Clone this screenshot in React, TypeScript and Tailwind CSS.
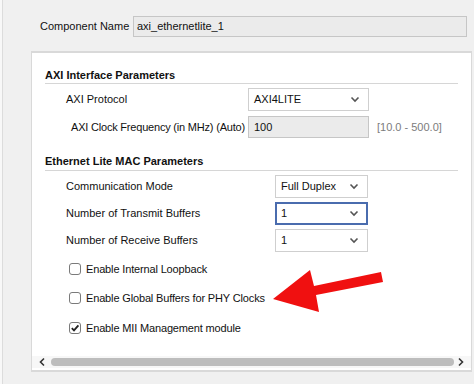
import React from 'react'

const font = { fontFamily: '"Liberation Sans", Arial, sans-serif' }

function Chevron() {
    return (
        <svg width="10" height="7" viewBox="0 0 10 7" className="shrink-0">
            <polyline points="1.5,1.5 5,5 8.5,1.5" fill="none" stroke="#555" strokeWidth="1.6" />
        </svg>
    )
}

function Select({ value, w, active }: { value: string; w: string; active?: boolean }) {
    return (
        <div className={`flex items-center justify-between bg-white h-[23px] shrink-0 ${w} ${active ? 'border-2 border-[#4a6cae] pl-[4px] pr-[7px]' : 'border border-[#cfcfcf] pl-[5px] pr-[8px]'}`}>
            <span>{value}</span>
            <Chevron />
        </div>
    )
}

function Check({ label, checked }: { label: string; checked?: boolean }) {
    return (
        <div className="flex items-center h-[20px] pl-[24px]">
            <div className="w-[12px] h-[12px] rounded-[3px] border border-[#7a7a7a] bg-white flex items-center justify-center shrink-0">
                {checked && (
                    <svg width="10" height="10" viewBox="0 0 10 10">
                        <polyline points="1.8,5.2 4,7.4 8.4,2.4" fill="none" stroke="#222" strokeWidth="1.8" />
                    </svg>
                )}
            </div>
            <span className="ml-[5px] tracking-[-0.15px]">{label}</span>
        </div>
    )
}

export default function App() {
    return (
        <div className="w-[474px] h-[384px] bg-[#f0f0f0] relative overflow-hidden flex text-[11px] text-[#111] whitespace-nowrap" style={font}>
            <div className="w-[3px] h-full bg-[#f8f8f8] border-r border-[#dcdcdc] shrink-0" />
            <div className="flex-1 flex flex-col pl-[28px]">
                <div className="flex items-center mt-[16px] h-[21px]">
                    <span className="ml-[9px] w-[93px] shrink-0">Component Name</span>
                    <div className="w-[334px] h-[21px] bg-[#ebebeb] border border-[#c6c6c6] pl-[3px] flex items-center shrink-0">axi_ethernetlite_1</div>
                </div>
                <div className="mt-[14px] w-[441px] h-[321px] bg-white border-t-2 border-l border-r border-b-2 border-[#d9d9d9] flex flex-col pl-[13px] pr-[13px]">
                    <div className="mt-[14px] h-[17px] border-b border-[#d6d6d6] font-bold">AXI Interface Parameters</div>
                    <div className="mt-[4px] flex items-center h-[23px]">
                        <span className="pl-[21px] w-[203px] shrink-0">AXI Protocol</span>
                        <Select value="AXI4LITE" w="w-[121px]" />
                    </div>
                    <div className="mt-[5px] flex items-center h-[22px]">
                        <span className="pl-[26px] w-[203px] shrink-0 tracking-[-0.2px]">AXI Clock Frequency (in MHz) (Auto)</span>
                        <div className="w-[121px] h-[22px] bg-[#ebebeb] border border-[#c6c6c6] pl-[5px] flex items-center shrink-0">100</div>
                        <span className="ml-[8px] text-[#7c7c7c]">[10.0 - 500.0]</span>
                    </div>
                    <div className="mt-[15px] h-[18px] border-b border-[#d6d6d6] font-bold">Ethernet Lite MAC Parameters</div>
                    <div className="mt-[4px] flex items-center h-[23px]">
                        <span className="pl-[21px] w-[230px] shrink-0">Communication Mode</span>
                        <Select value="Full Duplex" w="w-[93px]" />
                    </div>
                    <div className="mt-[4px] flex items-center h-[23px]">
                        <span className="pl-[21px] w-[230px] shrink-0">Number of Transmit Buffers</span>
                        <Select value="1" w="w-[93px]" active />
                    </div>
                    <div className="mt-[4px] flex items-center h-[23px]">
                        <span className="pl-[21px] w-[230px] shrink-0">Number of Receive Buffers</span>
                        <Select value="1" w="w-[93px]" />
                    </div>
                    <div className="mt-[7px]"><Check label="Enable Internal Loopback" /></div>
                    <div className="mt-[9px]"><Check label="Enable Global Buffers for PHY Clocks" /></div>
                    <div className="mt-[10px]"><Check label="Enable MII Management module" checked /></div>
                    <div className="flex-1" />
                    <div className="mb-[2px] -ml-[13px] -mr-[13px] h-[12px] flex items-center bg-[#f7f7f7] px-[6px]">
                        <svg width="8" height="10" viewBox="0 0 8 10">
                            <polyline points="6,1.5 2.5,5 6,8.5" fill="none" stroke="#333" strokeWidth="1.6" />
                        </svg>
                        <div className="ml-[5px] h-[8px] w-[403px] rounded-full bg-[#bdbdbd]" />
                        <div className="flex-1" />
                        <svg width="8" height="10" viewBox="0 0 8 10">
                            <polyline points="2,1.5 5.5,5 2,8.5" fill="none" stroke="#333" strokeWidth="1.6" />
                        </svg>
                    </div>
                </div>
            </div>
            <svg className="absolute left-0 top-0" width="474" height="384" viewBox="0 0 474 384">
                <polygon points="381,272 383,282 316,295 319,312 273,299 310,270 314,286" fill="#f01010" />
            </svg>
        </div>
    )
}
